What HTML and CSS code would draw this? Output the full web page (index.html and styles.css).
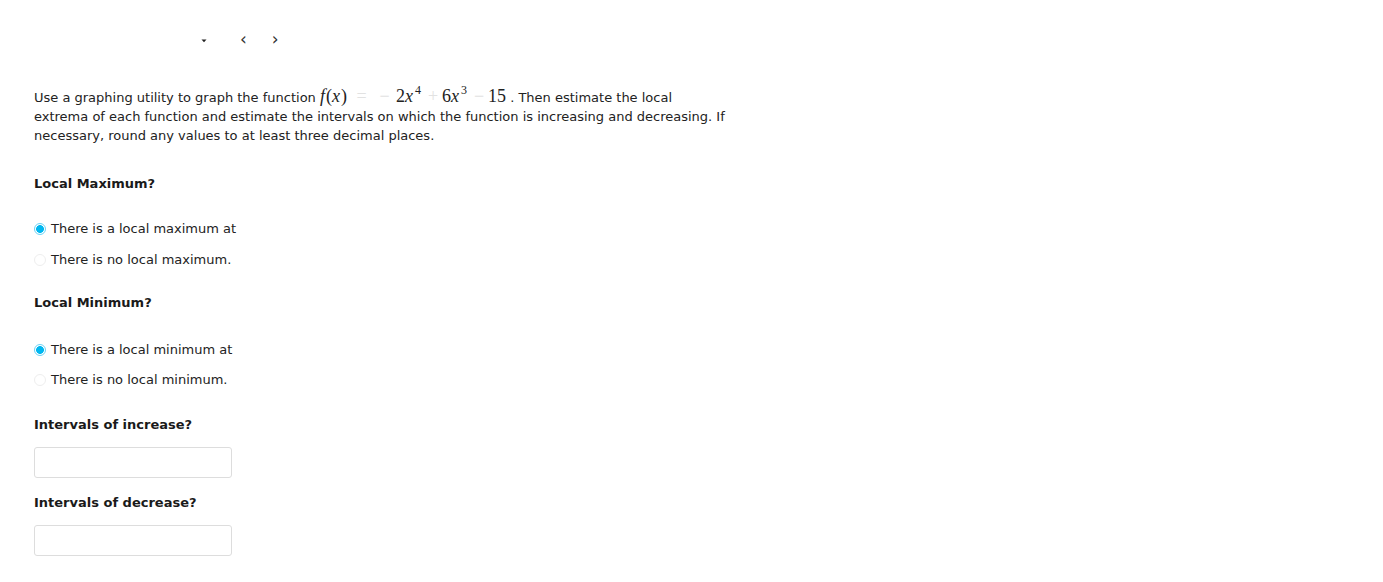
FILE: index.html
```html
<!DOCTYPE html>
<html>
<head>
<meta charset="utf-8">
<link rel="stylesheet" href="styles.css">
</head>
<body>
<div class="nav">
  <span class="caret"><svg width="6" height="4" viewBox="0 0 6 4"><path d="M0.5 0.5 L3 3.2 L5.5 0.5" fill="#222"/></svg></span>
  <span class="arrow">&lsaquo;</span>
  <span class="arrow">&rsaquo;</span>
</div>
<div class="content">
  <p class="question">Use a graphing utility to graph the function <span class="math"><i>f</i>(<i>x</i>)<span class="op rel">=</span><span class="op un">&minus;</span>2<i>x</i><sup>4</sup><span class="op bin">+</span>6<i>x</i><sup>3</sup><span class="op bin">&minus;</span>15</span> . Then estimate the local extrema of each function and estimate the intervals on which the function is increasing and decreasing. If necessary, round any values to at least three decimal places.</p>

  <h3 class="label first">Local Maximum?</h3>
  <div class="options">
    <label class="opt"><span class="radio on"></span>There is a local maximum at</label>
    <label class="opt"><span class="radio"></span>There is no local maximum.</label>
  </div>

  <h3 class="label">Local Minimum?</h3>
  <div class="options second">
    <label class="opt"><span class="radio on"></span>There is a local minimum at</label>
    <label class="opt"><span class="radio"></span>There is no local minimum.</label>
  </div>

  <h3 class="label">Intervals of increase?</h3>
  <div class="field"></div>

  <h3 class="label">Intervals of decrease?</h3>
  <div class="field"></div>
</div>
</body>
</html>
```
FILE: styles.css
```css
html, body { margin: 0; padding: 0; background: #fff; }
body { font-family: "DejaVu Sans", sans-serif; color: #222; font-size: 13px; }
.nav { display: flex; align-items: center; height: 22px; margin-top: 28px; padding-left: 201px; }
.caret { width: 6px; display: flex; align-items: center; margin-top: 4px; }
.arrow { font-size: 17px; line-height: 17px; color: #333; }
.nav .arrow:nth-child(2) { margin-left: 33px; }
.nav .arrow:nth-child(3) { margin-left: 25px; }
.content { padding-left: 34px; width: 692px; }
.question { margin: 38px 0 0 0; line-height: 19px; }
.math { font-family: "Liberation Serif", serif; font-size: 18px; color: #222; line-height: 0; }
.math i { letter-spacing: 1px; }
.math sup { font-size: 12px; line-height: 0; vertical-align: 8px; margin-left: 1px; }
.op { display: inline-block; color: #e2e2e2; text-align: center; }
.op.rel { width: 13px; margin: 0 10px 0 8px; }
.op.un { width: 13px; margin-right: 5px; }
.op.bin { width: 12px; margin: 0 3px 0 6px; }
.label { font-size: 13px; font-weight: bold; margin: 0; line-height: 18px; color: #1a1a1a; }
.label.first { margin-top: 30px; }
.options { display: flex; flex-direction: column; gap: 13px; margin-top: 27px; margin-bottom: 25px; }
.options.second { margin-top: 29px; gap: 12px; margin-bottom: 27px; }
.opt { display: flex; align-items: center; line-height: 18px; }
.radio { width: 12px; height: 12px; border-radius: 50%; border: 1px solid #eee; box-sizing: border-box; margin-right: 5px; background: #fff; }
.radio.on { border: 1px solid #6cd3f5; background: radial-gradient(circle, #00b7f0 0 3.6px, #fff 4.2px); }
.field { width: 198px; height: 31px; border: 1px solid #ddd; border-radius: 3px; box-sizing: border-box; margin: 13px 0 16px; }
```
